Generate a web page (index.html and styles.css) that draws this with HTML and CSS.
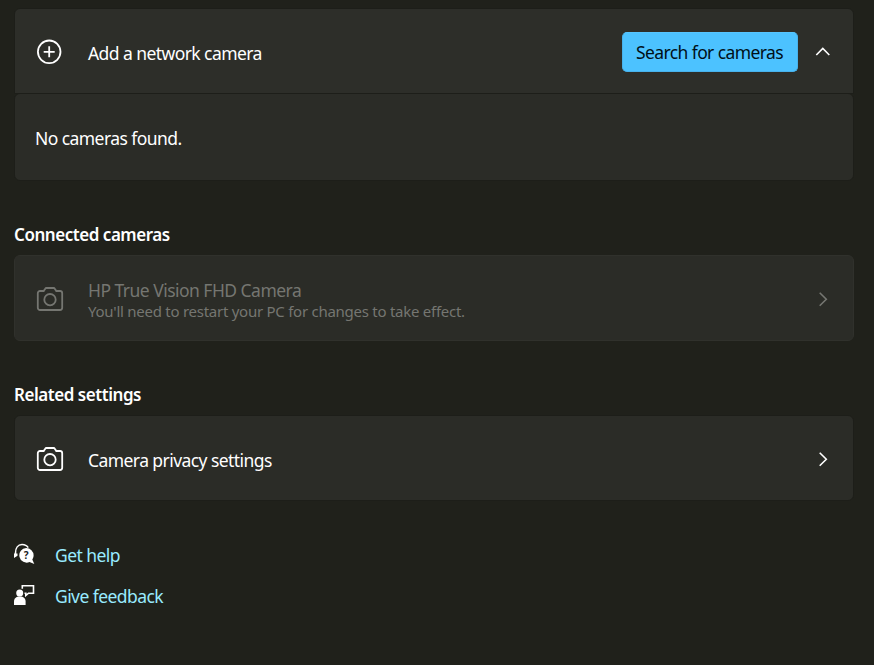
FILE: index.html
```
<!DOCTYPE html>
<html lang="en">
<head>
<meta charset="utf-8">
<title>Cameras</title>
<link rel="stylesheet" href="styles.css">
</head>
<body>
<svg class="defs" width="0" height="0" aria-hidden="true">
  <symbol id="camera" viewBox="0 0 28 28">
    <path d="M4 6h3.700l1.500-2.300c.3-.5.7-.7 1.200-.7h7.200c.5 0 .9.2 1.200.7L20.300 6H24c1.200 0 2.200.9 2.200 2.200v14.600c0 1.200-.9 2.200-2.200 2.200H4c-1.200 0-2.200-.9-2.200-2.200V8.200C1.800 6.900 2.800 6 4 6z"/>
    <circle cx="14" cy="14.700" r="5.700"/>
  </symbol>
  <symbol id="chevron" viewBox="0 0 16 16"><path d="M4.700 1.700 11.300 8.200 4.700 14.700"/></symbol>
</svg>
<main class="page">
  <section class="expander">
    <div class="card head">
      <svg class="icon" viewBox="0 0 28 28"><circle cx="13.200" cy="13.800" r="11.300"/><path d="M13.200 8.300v11M7.700 13.800h11"/></svg>
      <span class="label add">Add a network camera</span>
      <button class="primary"><span class="search">Search for cameras</span></button>
      <svg class="chevron up" viewBox="0 0 16 16"><path d="M1.300 11 7.800 4.400l6.500 6.600"/></svg>
    </div>
    <div class="card body"><span class="none">No cameras found.</span></div>
  </section>

  <h2 class="connected">Connected cameras</h2>
  <div class="card device">
    <svg class="icon"><use href="#camera"/></svg>
    <div class="label">
      <div class="name"><span>HP True Vision FHD Camera</span></div>
      <div class="note"><span>You'll need to restart your PC for changes to take effect.</span></div>
    </div>
    <svg class="chevron"><use href="#chevron"/></svg>
  </div>

  <h2 class="related">Related settings</h2>
  <div class="card privacy">
    <svg class="icon"><use href="#camera"/></svg>
    <span class="label">Camera privacy settings</span>
    <svg class="chevron"><use href="#chevron"/></svg>
  </div>

  <nav class="links">
    <a class="help">
      <svg viewBox="0 0 22 22"><path class="line" d="M1.500 12.500V10C1.500 5 4 1.500 8 1.500c3 0 5 1.200 6.200 3.200"/><path class="fill" d="M0 10.500h3.500v2.300L0 15zM12.300 5a7.300 7.300 0 0 1 7.300 7.300c0 1.700-.5 3.100-1.300 4.300l2 4.400-4.800-2A7.300 7.300 0 1 1 12.300 5z"/><text x="12.200" y="16">?</text></svg>
      <span>Get help</span>
    </a>
    <a class="feedback">
      <svg viewBox="0 0 22 22"><path class="fill" d="M0 21v-3.500c0-3 2-5 5.800-5s5.800 2 5.800 5V21z"/><circle class="fill" cx="5.700" cy="9" r="3.500"/><path class="line" d="M8.300 4.800v-3h11.200v7.400h-5l-2.700 2.300V9.200h-1.300"/></svg>
      <span>Give feedback</span>
    </a>
  </nav>
</main>
</body>
</html>
```
FILE: styles.css
```
* { box-sizing: border-box; }
body {
  margin: 0;
  background: #20211b;
  color: #fff;
  font: 17.5px/24px "Noto Sans", "Open Sans", sans-serif;
  letter-spacing: -0.57px;
  white-space: nowrap;
}
.defs { position: absolute; }
.page { height: 665px; padding: 9px 20px 0 14px; overflow: hidden; }
.card {
  display: flex;
  align-items: center;
  background: #2b2c27;
  border: 1px solid #1d1e19;
  border-radius: 6px;
  padding: 0 22px 0 21px;
}
.head { height: 86px; background: #2d2e29; border-radius: 6px 6px 0 0; margin-top: -1px; padding-top: 1px; }
.body { height: 88px; margin-top: -1px; padding-left: 20px; padding-top: 1px; }
.icon { width: 28px; height: 28px; margin-right: 24px; flex: none; }
.icon, .chevron { fill: none; stroke: currentColor; stroke-width: 1.8; }
.label { flex: 1; padding-top: 3px; }
.chevron { width: 16px; height: 16px; flex: none; stroke-width: 1.6; }
.up { margin-left: 17px; }
.primary {
  width: 176px;
  height: 40px;
  padding: 1px 1px 0 0;
  border: 1px solid #48b2ec;
  border-top-color: #56c5ff;
  border-radius: 5px;
  background: #4cc2ff;
  color: #001018;
  font: inherit;
  letter-spacing: -0.6px;
}
h2 { margin: 0; font: 600 17px/24px "Noto Sans", "Open Sans", sans-serif; letter-spacing: -0.46px; }
.connected { margin-top: 42px; }
.device { height: 86px; margin-top: 8px; padding-top: 2px; border-color: #30312c; color: #757671; }
.name { line-height: 21px; letter-spacing: -0.53px; }
.note { font-size: 15px; line-height: 20px; letter-spacing: -0.26px; }
.related { margin-top: 42px; }
.privacy { height: 86px; margin-top: 8px; padding-top: 1px; }
.links { display: flex; flex-direction: column; gap: 17px; margin-top: 42px; color: #99ebff; }
.links a { display: flex; align-items: center; height: 24px; }
.links svg { width: 22px; height: 22px; margin-right: 19px; margin-top: -2px; }
.fill { fill: #fff; }
.line { fill: none; stroke: #fff; stroke-width: 1.6; }
text { font: 700 10px "Noto Sans", sans-serif; letter-spacing: 0; text-anchor: middle; fill: #20211b; }
```
